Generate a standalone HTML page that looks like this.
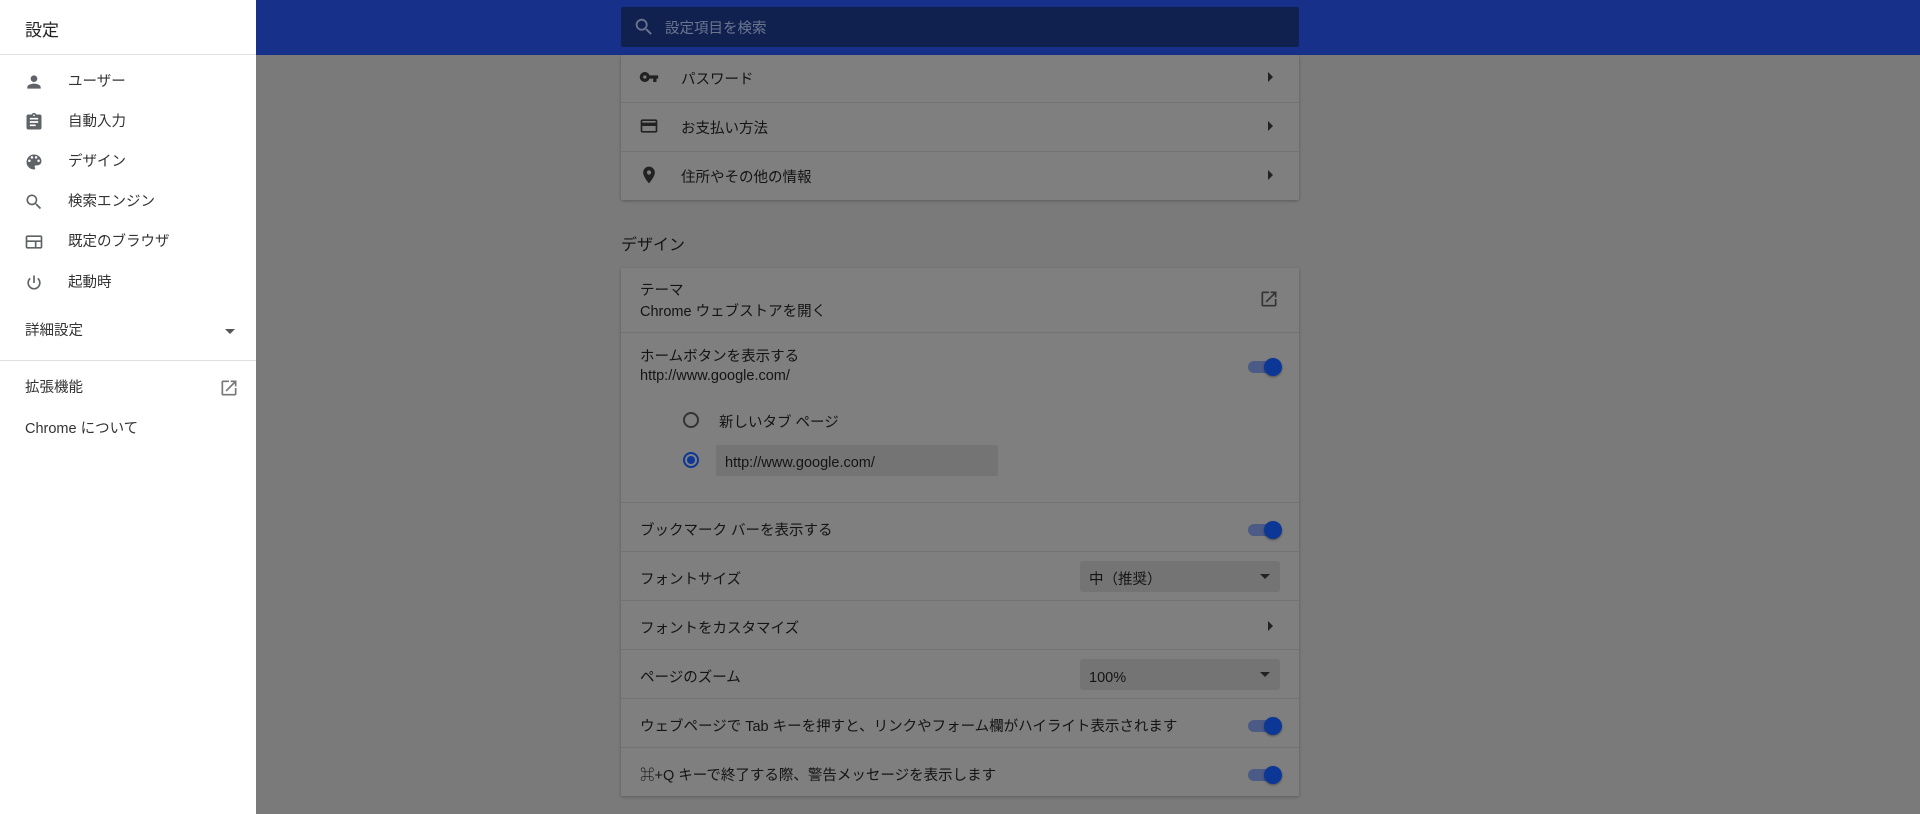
<!DOCTYPE html>
<html><head><meta charset="utf-8"><style>
*{margin:0;padding:0;box-sizing:border-box}
body{width:1920px;height:814px;overflow:hidden;background:#7a7a7a;font-family:"Liberation Sans","Noto Sans CJK JP",sans-serif;position:relative}
.side{position:absolute;left:0;top:0;width:256px;height:814px;background:#fff;color:#333;z-index:3}
.side .hd{height:55px;border-bottom:1px solid #e0e0e0;font-size:17px;color:#222;padding:16px 0 0 25px}
.si{position:absolute;left:0;font-size:14.5px;color:#333;height:20px;line-height:20px}
.si svg{position:absolute;left:24px;top:0}
.si span{position:absolute;left:68px;white-space:nowrap}
.top{position:absolute;left:256px;top:0;right:0;height:55px;background:#17318a}
.search{position:absolute;left:621px;top:7px;width:678px;height:40px;background:#10214f;border-radius:2px;color:#6b7590;font-size:14.5px}
.search span{position:absolute;left:44px;top:12px;line-height:20px}
.card{position:absolute;left:621px;width:678px;background:#7f7f7f;border-radius:2px;box-shadow:0 1px 3px rgba(0,0,0,.25)}
.t{position:absolute;font-size:14.5px;line-height:20px;color:#141414;white-space:nowrap;margin-top:3px}
.ln{position:absolute;left:0;right:0;height:1px;background:#737373}
.chev{position:absolute;width:0;height:0;border-top:5px solid transparent;border-bottom:5px solid transparent;border-left:5px solid #222}
.tg{position:absolute;left:627px;width:30px;height:12px;border-radius:6px;background:#4b5b85}
.tg::after{content:"";position:absolute;right:-4px;top:-3px;width:18px;height:18px;border-radius:50%;background:#0c3796;box-shadow:0 1px 2px rgba(0,0,0,.4)}
.sel{position:absolute;left:459px;width:200px;height:31px;background:#747474;border-radius:3px}
.sel::after{content:"";position:absolute;right:10px;top:13px;border-left:5px solid transparent;border-right:5px solid transparent;border-top:5px solid #222}
</style></head><body>
<div class="side">
<div class="hd">設定</div>
<div class="si" style="top:72px"><svg width="20" height="20" viewBox="0 0 24 24"><path fill="#5f6368" d="M12 12c2.2 0 4-1.8 4-4s-1.8-4-4-4-4 1.8-4 4 1.8 4 4 4zm0 2c-2.7 0-8 1.3-8 4v2h16v-2c0-2.7-5.300-4-8-4z"/></svg><span>ユーザー</span></div>
<div class="si" style="top:112px"><svg width="20" height="20" viewBox="0 0 24 24"><path fill="#5f6368" d="M19 3h-4.2C14.4 1.8 13.3 1 12 1s-2.4.8-2.8 2H5c-1.1 0-2 .9-2 2v14c0 1.1.9 2 2 2h14c1.1 0 2-.9 2-2V5c0-1.1-.9-2-2-2zm-7 0c.6 0 1 .4 1 1s-.4 1-1 1-1-.4-1-1 .4-1 1-1zm2 14H7v-2h7v2zm3-4H7v-2h10v2zm0-4H7V7h10v2z"/></svg><span>自動入力</span></div>
<div class="si" style="top:152px"><svg width="20" height="20" viewBox="0 0 24 24"><path fill="#5f6368" d="M12 3a9 9 0 0 0 0 18c.8 0 1.5-.7 1.5-1.5 0-.4-.1-.7-.4-1-.2-.3-.4-.6-.4-1 0-.8.7-1.5 1.5-1.5H16c2.8 0 5-2.2 5-5 0-4.4-4-8-9-8zm-5.5 9a1.5 1.5 0 1 1 0-3 1.5 1.5 0 0 1 0 3zm3-4a1.5 1.5 0 1 1 0-3 1.5 1.5 0 0 1 0 3zm5 0a1.5 1.5 0 1 1 0-3 1.5 1.5 0 0 1 0 3zm3 4a1.5 1.5 0 1 1 0-3 1.5 1.5 0 0 1 0 3z"/></svg><span>デザイン</span></div>
<div class="si" style="top:192px"><svg width="20" height="20" viewBox="0 0 24 24"><path fill="#5f6368" d="M15.5 14h-.8l-.3-.3A6.5 6.5 0 1 0 9.5 16c1.6 0 3.1-.6 4.2-1.6l.3.3v.8l5 5 1.5-1.5-5-5zm-6 0C7 14 5 12 5 9.5S7 5 9.5 5 14 7 14 9.5 12 14 9.5 14z"/></svg><span>検索エンジン</span></div>
<div class="si" style="top:232px"><svg width="20" height="20" viewBox="0 0 24 24"><path fill="#5f6368" d="M20 4H4c-1.1 0-2 .9-2 2v12c0 1.1.9 2 2 2h16c1.1 0 2-.9 2-2V6c0-1.1-.9-2-2-2zm0 14h-5v-6h5v6zm0-8H4V6h16v4zM4 12h9v6H4z"/></svg><span>既定のブラウザ</span></div>
<div class="si" style="top:273px"><svg width="20" height="20" viewBox="0 0 24 24"><path fill="none" stroke="#5f6368" stroke-width="2" d="M12 3v9M7.5 6.5a7 7 0 1 0 9 0"/></svg><span>起動時</span></div>
<div class="si" style="top:321px"><span style="left:25px">詳細設定</span><div style="position:absolute;left:225px;top:8px;border-left:5px solid transparent;border-right:5px solid transparent;border-top:5px solid #555"></div></div>
<div style="position:absolute;left:0;top:360px;width:256px;height:1px;background:#e0e0e0"></div>
<div class="si" style="top:378px"><span style="left:25px">拡張機能</span><svg style="left:219px" width="20" height="20" viewBox="0 0 24 24"><path fill="#777" d="M19 19H5V5h7V3H5a2 2 0 0 0-2 2v14a2 2 0 0 0 2 2h14c1.1 0 2-.9 2-2v-7h-2v7zM14 3v2h3.6l-9.8 9.8 1.4 1.4L19 6.4V10h2V3h-7z"/></svg></div>
<div class="si" style="top:419px"><span style="left:25px">Chrome について</span></div>
</div>
<div class="top"></div>
<div class="search"><svg style="position:absolute;left:12px;top:9px" width="22" height="22" viewBox="0 0 24 24"><path fill="#6b7590" d="M15.5 14h-.8l-.3-.3A6.5 6.5 0 1 0 9.5 16c1.6 0 3.1-.6 4.2-1.6l.3.3v.8l5 5 1.5-1.5-5-5zm-6 0C7 14 5 12 5 9.5S7 5 9.5 5 14 7 14 9.5 12 14 9.5 14z"/></svg><span>設定項目を検索</span></div>

<div class="card" style="top:55px;height:145px;z-index:0">
<svg style="position:absolute;left:18px;top:12px" width="20" height="20" viewBox="0 0 24 24"><path fill="#222" d="M12.6 10A6 6 0 1 0 7 18a6 6 0 0 0 5.6-4H17v4h4v-4h2v-4H12.6zM7 14a2 2 0 1 1 0-4 2 2 0 0 1 0 4z"/></svg>
<div class="t" style="left:60px;top:12px">パスワード</div><div class="chev" style="left:647px;top:17px"></div>
<div class="ln" style="top:47px"></div>
<svg style="position:absolute;left:18px;top:61px" width="20" height="20" viewBox="0 0 24 24"><path fill="#222" d="M20 4H4c-1.1 0-2 .9-2 2v12c0 1.1.9 2 2 2h16c1.1 0 2-.9 2-2V6c0-1.1-.9-2-2-2zm0 14H4v-6h16v6zm0-10H4V6h16v2z"/></svg>
<div class="t" style="left:60px;top:61px">お支払い方法</div><div class="chev" style="left:647px;top:66px"></div>
<div class="ln" style="top:96px"></div>
<svg style="position:absolute;left:18px;top:110px" width="20" height="20" viewBox="0 0 24 24"><path fill="#222" d="M12 2a7 7 0 0 0-7 7c0 5.3 7 13 7 13s7-7.7 7-13a7 7 0 0 0-7-7zm0 9.5a2.5 2.5 0 1 1 0-5 2.5 2.5 0 0 1 0 5z"/></svg>
<div class="t" style="left:60px;top:110px">住所やその他の情報</div><div class="chev" style="left:647px;top:115px"></div>
</div>

<div class="t" style="left:621px;top:233px;font-size:16px">デザイン</div>

<div class="card" style="top:268px;height:528px">
<div class="t" style="left:19px;top:10px">テーマ</div>
<div class="t" style="left:19px;top:31px">Chrome ウェブストアを開く</div>
<svg style="position:absolute;left:638px;top:21px" width="20" height="20" viewBox="0 0 24 24"><path fill="#333" d="M19 19H5V5h7V3H5a2 2 0 0 0-2 2v14a2 2 0 0 0 2 2h14c1.1 0 2-.9 2-2v-7h-2v7zM14 3v2h3.6l-9.8 9.8 1.4 1.4L19 6.4V10h2V3h-7z"/></svg>
<div class="ln" style="top:64px"></div>
<div class="t" style="left:19px;top:76px">ホームボタンを表示する</div>
<div class="t" style="left:19px;top:95px">http://www.google.com/</div>
<div class="tg" style="top:93px"></div>
<div style="position:absolute;left:62px;top:144px;width:16px;height:16px;border:2px solid #333;border-radius:50%"></div>
<div class="t" style="left:98px;top:142px">新しいタブ ページ</div>
<div style="position:absolute;left:62px;top:184px;width:16px;height:16px;border:2px solid #0c3796;border-radius:50%"><div style="position:absolute;left:2px;top:2px;width:8px;height:8px;border-radius:50%;background:#0c3796"></div></div>
<div style="position:absolute;left:95px;top:177px;width:282px;height:31px;background:#747474;border-radius:2px"></div>
<div class="t" style="left:104px;top:182px">http://www.google.com/</div>
<div class="ln" style="top:234px"></div>
<div class="t" style="left:19px;top:250px">ブックマーク バーを表示する</div><div class="tg" style="top:256px"></div>
<div class="ln" style="top:283px"></div>
<div class="t" style="left:19px;top:299px">フォントサイズ</div><div class="sel" style="top:293px"></div><div class="t" style="left:468px;top:299px">中（推奨）</div>
<div class="ln" style="top:332px"></div>
<div class="t" style="left:19px;top:348px">フォントをカスタマイズ</div><div class="chev" style="left:647px;top:353px"></div>
<div class="ln" style="top:381px"></div>
<div class="t" style="left:19px;top:397px">ページのズーム</div><div class="sel" style="top:391px"></div><div class="t" style="left:468px;top:397px">100%</div>
<div class="ln" style="top:430px"></div>
<div class="t" style="left:19px;top:446px">ウェブページで Tab キーを押すと、リンクやフォーム欄がハイライト表示されます</div><div class="tg" style="top:452px"></div>
<div class="ln" style="top:479px"></div>
<div class="t" style="left:19px;top:495px">⌘+Q キーで終了する際、警告メッセージを表示します</div><div class="tg" style="top:501px"></div>
</div>
</body></html>
